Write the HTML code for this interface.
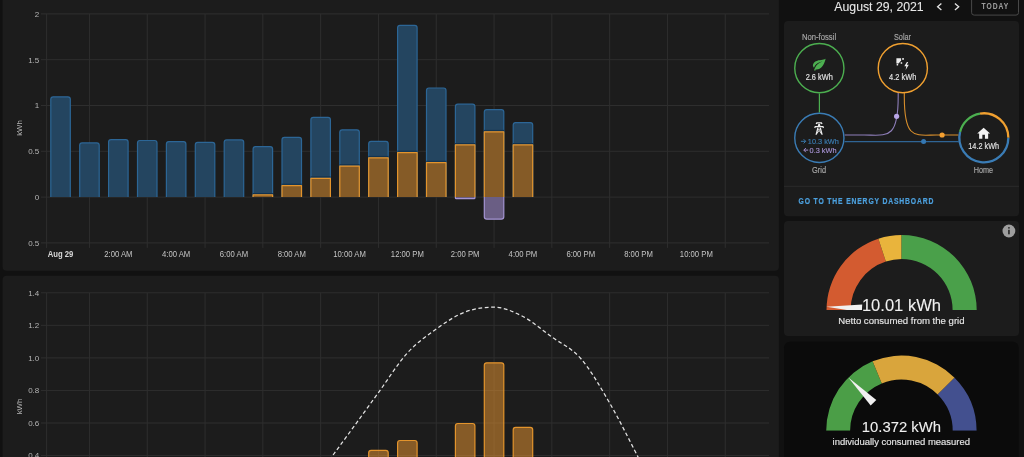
<!DOCTYPE html>
<html><head><meta charset="utf-8"><style>
html,body{margin:0;padding:0;background:#111111;width:1024px;height:457px;overflow:hidden}
svg{display:block;will-change:transform}
</style></head><body>
<svg width="1024" height="457" viewBox="0 0 1024 457">
<rect width="1024" height="457" fill="#111111"/>
<rect x="2.6" y="-10" width="776.3" height="280.8" rx="4" fill="#1c1c1c"/>
<rect x="2.6" y="275.8" width="776.3" height="200" rx="4" fill="#1c1c1c"/>
<rect x="784" y="21" width="235" height="195.2" rx="4" fill="#1c1c1c"/>
<rect x="784" y="221" width="235" height="115" rx="4" fill="#1c1c1c"/>
<rect x="784" y="341.7" width="234.7" height="130" rx="6" fill="#0b0b0b"/>
<g stroke="#2e2e2e" stroke-width="1"><line x1="41" y1="13.90" x2="769" y2="13.90"/><line x1="41" y1="59.70" x2="769" y2="59.70"/><line x1="41" y1="105.50" x2="769" y2="105.50"/><line x1="41" y1="151.30" x2="769" y2="151.30"/><line x1="41" y1="197.10" x2="769" y2="197.10"/><line x1="41" y1="242.90" x2="769" y2="242.90"/><line x1="46.6" y1="13.90" x2="46.6" y2="247.90"/><line x1="89.45" y1="13.90" x2="89.45" y2="247.90"/><line x1="147.25" y1="13.90" x2="147.25" y2="247.90"/><line x1="205.05" y1="13.90" x2="205.05" y2="247.90"/><line x1="262.85" y1="13.90" x2="262.85" y2="247.90"/><line x1="320.65" y1="13.90" x2="320.65" y2="247.90"/><line x1="378.45" y1="13.90" x2="378.45" y2="247.90"/><line x1="436.25" y1="13.90" x2="436.25" y2="247.90"/><line x1="494.05" y1="13.90" x2="494.05" y2="247.90"/><line x1="551.85" y1="13.90" x2="551.85" y2="247.90"/><line x1="609.65" y1="13.90" x2="609.65" y2="247.90"/><line x1="667.45" y1="13.90" x2="667.45" y2="247.90"/><line x1="725.25" y1="13.90" x2="725.25" y2="247.90"/></g>
<g font-family="Liberation Sans, sans-serif" font-size="8" fill="#b4b4b4"><text x="39.3" y="16.80" text-anchor="end">2</text><text x="39.3" y="62.60" text-anchor="end">1.5</text><text x="39.3" y="108.40" text-anchor="end">1</text><text x="39.3" y="154.20" text-anchor="end">0.5</text><text x="39.3" y="200.00" text-anchor="end">0</text><text x="39.3" y="245.80" text-anchor="end">0.5</text></g>
<text font-family="Liberation Sans, sans-serif" font-size="7.8" fill="#b4b4b4" transform="translate(22.3,128) rotate(-90)" text-anchor="middle">kWh</text>
<g font-family="Liberation Sans, sans-serif" font-size="8.4" fill="#c4c4c4"><text x="60.55" y="256.9" text-anchor="middle" font-weight="bold" fill="#d8d8d8" textLength="25.67" lengthAdjust="spacingAndGlyphs">Aug 29</text><text x="118.35" y="256.9" text-anchor="middle" textLength="28.25" lengthAdjust="spacingAndGlyphs">2:00 AM</text><text x="176.15" y="256.9" text-anchor="middle" textLength="28.25" lengthAdjust="spacingAndGlyphs">4:00 AM</text><text x="233.95" y="256.9" text-anchor="middle" textLength="28.25" lengthAdjust="spacingAndGlyphs">6:00 AM</text><text x="291.75" y="256.9" text-anchor="middle" textLength="28.25" lengthAdjust="spacingAndGlyphs">8:00 AM</text><text x="349.55" y="256.9" text-anchor="middle" textLength="32.53" lengthAdjust="spacingAndGlyphs">10:00 AM</text><text x="407.35" y="256.9" text-anchor="middle" textLength="32.96" lengthAdjust="spacingAndGlyphs">12:00 PM</text><text x="465.15" y="256.9" text-anchor="middle" textLength="28.67" lengthAdjust="spacingAndGlyphs">2:00 PM</text><text x="522.95" y="256.9" text-anchor="middle" textLength="28.67" lengthAdjust="spacingAndGlyphs">4:00 PM</text><text x="580.75" y="256.9" text-anchor="middle" textLength="28.67" lengthAdjust="spacingAndGlyphs">6:00 PM</text><text x="638.55" y="256.9" text-anchor="middle" textLength="28.67" lengthAdjust="spacingAndGlyphs">8:00 PM</text><text x="696.35" y="256.9" text-anchor="middle" textLength="32.96" lengthAdjust="spacingAndGlyphs">10:00 PM</text></g>
<g><path d="M50.80,197.10 L50.80,99.20 Q50.80,96.80 53.20,96.80 L67.90,96.80 Q70.30,96.80 70.30,99.20 L70.30,197.10 Z" fill="#244560"/><path d="M50.80,197.10 L50.80,99.20 Q50.80,96.80 53.20,96.80 L67.90,96.80 Q70.30,96.80 70.30,99.20 L70.30,197.10" fill="none" stroke="#2c6696" stroke-width="1.2"/><path d="M79.70,197.10 L79.70,145.30 Q79.70,142.90 82.10,142.90 L96.80,142.90 Q99.20,142.90 99.20,145.30 L99.20,197.10 Z" fill="#244560"/><path d="M79.70,197.10 L79.70,145.30 Q79.70,142.90 82.10,142.90 L96.80,142.90 Q99.20,142.90 99.20,145.30 L99.20,197.10" fill="none" stroke="#2c6696" stroke-width="1.2"/><path d="M108.60,197.10 L108.60,142.10 Q108.60,139.70 111.00,139.70 L125.70,139.70 Q128.10,139.70 128.10,142.10 L128.10,197.10 Z" fill="#244560"/><path d="M108.60,197.10 L108.60,142.10 Q108.60,139.70 111.00,139.70 L125.70,139.70 Q128.10,139.70 128.10,142.10 L128.10,197.10" fill="none" stroke="#2c6696" stroke-width="1.2"/><path d="M137.50,197.10 L137.50,142.90 Q137.50,140.50 139.90,140.50 L154.60,140.50 Q157.00,140.50 157.00,142.90 L157.00,197.10 Z" fill="#244560"/><path d="M137.50,197.10 L137.50,142.90 Q137.50,140.50 139.90,140.50 L154.60,140.50 Q157.00,140.50 157.00,142.90 L157.00,197.10" fill="none" stroke="#2c6696" stroke-width="1.2"/><path d="M166.40,197.10 L166.40,144.00 Q166.40,141.60 168.80,141.60 L183.50,141.60 Q185.90,141.60 185.90,144.00 L185.90,197.10 Z" fill="#244560"/><path d="M166.40,197.10 L166.40,144.00 Q166.40,141.60 168.80,141.60 L183.50,141.60 Q185.90,141.60 185.90,144.00 L185.90,197.10" fill="none" stroke="#2c6696" stroke-width="1.2"/><path d="M195.30,197.10 L195.30,144.80 Q195.30,142.40 197.70,142.40 L212.40,142.40 Q214.80,142.40 214.80,144.80 L214.80,197.10 Z" fill="#244560"/><path d="M195.30,197.10 L195.30,144.80 Q195.30,142.40 197.70,142.40 L212.40,142.40 Q214.80,142.40 214.80,144.80 L214.80,197.10" fill="none" stroke="#2c6696" stroke-width="1.2"/><path d="M224.20,197.10 L224.20,142.30 Q224.20,139.90 226.60,139.90 L241.30,139.90 Q243.70,139.90 243.70,142.30 L243.70,197.10 Z" fill="#244560"/><path d="M224.20,197.10 L224.20,142.30 Q224.20,139.90 226.60,139.90 L241.30,139.90 Q243.70,139.90 243.70,142.30 L243.70,197.10" fill="none" stroke="#2c6696" stroke-width="1.2"/><path d="M253.10,197.10 L253.10,149.00 Q253.10,146.60 255.50,146.60 L270.20,146.60 Q272.60,146.60 272.60,149.00 L272.60,197.10 Z" fill="#244560"/><path d="M253.10,197.10 L253.10,149.00 Q253.10,146.60 255.50,146.60 L270.20,146.60 Q272.60,146.60 272.60,149.00 L272.60,197.10" fill="none" stroke="#2c6696" stroke-width="1.2"/><path d="M282.00,197.10 L282.00,139.80 Q282.00,137.40 284.40,137.40 L299.10,137.40 Q301.50,137.40 301.50,139.80 L301.50,197.10 Z" fill="#244560"/><path d="M282.00,197.10 L282.00,139.80 Q282.00,137.40 284.40,137.40 L299.10,137.40 Q301.50,137.40 301.50,139.80 L301.50,197.10" fill="none" stroke="#2c6696" stroke-width="1.2"/><path d="M310.90,197.10 L310.90,119.80 Q310.90,117.40 313.30,117.40 L328.00,117.40 Q330.40,117.40 330.40,119.80 L330.40,197.10 Z" fill="#244560"/><path d="M310.90,197.10 L310.90,119.80 Q310.90,117.40 313.30,117.40 L328.00,117.40 Q330.40,117.40 330.40,119.80 L330.40,197.10" fill="none" stroke="#2c6696" stroke-width="1.2"/><path d="M339.80,197.10 L339.80,132.20 Q339.80,129.80 342.20,129.80 L356.90,129.80 Q359.30,129.80 359.30,132.20 L359.30,197.10 Z" fill="#244560"/><path d="M339.80,197.10 L339.80,132.20 Q339.80,129.80 342.20,129.80 L356.90,129.80 Q359.30,129.80 359.30,132.20 L359.30,197.10" fill="none" stroke="#2c6696" stroke-width="1.2"/><path d="M368.70,197.10 L368.70,143.70 Q368.70,141.30 371.10,141.30 L385.80,141.30 Q388.20,141.30 388.20,143.70 L388.20,197.10 Z" fill="#244560"/><path d="M368.70,197.10 L368.70,143.70 Q368.70,141.30 371.10,141.30 L385.80,141.30 Q388.20,141.30 388.20,143.70 L388.20,197.10" fill="none" stroke="#2c6696" stroke-width="1.2"/><path d="M397.60,197.10 L397.60,27.70 Q397.60,25.30 400.00,25.30 L414.70,25.30 Q417.10,25.30 417.10,27.70 L417.10,197.10 Z" fill="#244560"/><path d="M397.60,197.10 L397.60,27.70 Q397.60,25.30 400.00,25.30 L414.70,25.30 Q417.10,25.30 417.10,27.70 L417.10,197.10" fill="none" stroke="#2c6696" stroke-width="1.2"/><path d="M426.50,197.10 L426.50,90.40 Q426.50,88.00 428.90,88.00 L443.60,88.00 Q446.00,88.00 446.00,90.40 L446.00,197.10 Z" fill="#244560"/><path d="M426.50,197.10 L426.50,90.40 Q426.50,88.00 428.90,88.00 L443.60,88.00 Q446.00,88.00 446.00,90.40 L446.00,197.10" fill="none" stroke="#2c6696" stroke-width="1.2"/><path d="M455.40,197.10 L455.40,106.60 Q455.40,104.20 457.80,104.20 L472.50,104.20 Q474.90,104.20 474.90,106.60 L474.90,197.10 Z" fill="#244560"/><path d="M455.40,197.10 L455.40,106.60 Q455.40,104.20 457.80,104.20 L472.50,104.20 Q474.90,104.20 474.90,106.60 L474.90,197.10" fill="none" stroke="#2c6696" stroke-width="1.2"/><path d="M484.30,197.10 L484.30,112.10 Q484.30,109.70 486.70,109.70 L501.40,109.70 Q503.80,109.70 503.80,112.10 L503.80,197.10 Z" fill="#244560"/><path d="M484.30,197.10 L484.30,112.10 Q484.30,109.70 486.70,109.70 L501.40,109.70 Q503.80,109.70 503.80,112.10 L503.80,197.10" fill="none" stroke="#2c6696" stroke-width="1.2"/><path d="M513.20,197.10 L513.20,125.00 Q513.20,122.60 515.60,122.60 L530.30,122.60 Q532.70,122.60 532.70,125.00 L532.70,197.10 Z" fill="#244560"/><path d="M513.20,197.10 L513.20,125.00 Q513.20,122.60 515.60,122.60 L530.30,122.60 Q532.70,122.60 532.70,125.00 L532.70,197.10" fill="none" stroke="#2c6696" stroke-width="1.2"/><rect x="252.80" y="193.00" width="20.10" height="1.0" fill="#12324f"/><path d="M253.10,197.10 L253.10,194.91 Q253.10,194.90 253.11,194.90 L272.59,194.90 Q272.60,194.90 272.60,194.91 L272.60,197.10 Z" fill="#855b27"/><path d="M253.10,197.10 L253.10,194.91 Q253.10,194.90 253.11,194.90 L272.59,194.90 Q272.60,194.90 272.60,194.91 L272.60,197.10" fill="none" stroke="#e3942c" stroke-width="1.2"/><rect x="281.70" y="183.70" width="20.10" height="1.0" fill="#12324f"/><path d="M282.00,197.10 L282.00,185.61 Q282.00,185.60 282.01,185.60 L301.49,185.60 Q301.50,185.60 301.50,185.61 L301.50,197.10 Z" fill="#855b27"/><path d="M282.00,197.10 L282.00,185.61 Q282.00,185.60 282.01,185.60 L301.49,185.60 Q301.50,185.60 301.50,185.61 L301.50,197.10" fill="none" stroke="#e3942c" stroke-width="1.2"/><rect x="310.60" y="176.40" width="20.10" height="1.0" fill="#12324f"/><path d="M310.90,197.10 L310.90,178.31 Q310.90,178.30 310.91,178.30 L330.39,178.30 Q330.40,178.30 330.40,178.31 L330.40,197.10 Z" fill="#855b27"/><path d="M310.90,197.10 L310.90,178.31 Q310.90,178.30 310.91,178.30 L330.39,178.30 Q330.40,178.30 330.40,178.31 L330.40,197.10" fill="none" stroke="#e3942c" stroke-width="1.2"/><rect x="339.50" y="164.20" width="20.10" height="1.0" fill="#12324f"/><path d="M339.80,197.10 L339.80,166.11 Q339.80,166.10 339.81,166.10 L359.29,166.10 Q359.30,166.10 359.30,166.11 L359.30,197.10 Z" fill="#855b27"/><path d="M339.80,197.10 L339.80,166.11 Q339.80,166.10 339.81,166.10 L359.29,166.10 Q359.30,166.10 359.30,166.11 L359.30,197.10" fill="none" stroke="#e3942c" stroke-width="1.2"/><rect x="368.40" y="155.90" width="20.10" height="1.0" fill="#12324f"/><path d="M368.70,197.10 L368.70,157.81 Q368.70,157.80 368.71,157.80 L388.19,157.80 Q388.20,157.80 388.20,157.81 L388.20,197.10 Z" fill="#855b27"/><path d="M368.70,197.10 L368.70,157.81 Q368.70,157.80 368.71,157.80 L388.19,157.80 Q388.20,157.80 388.20,157.81 L388.20,197.10" fill="none" stroke="#e3942c" stroke-width="1.2"/><rect x="397.30" y="150.70" width="20.10" height="1.0" fill="#12324f"/><path d="M397.60,197.10 L397.60,152.61 Q397.60,152.60 397.61,152.60 L417.09,152.60 Q417.10,152.60 417.10,152.61 L417.10,197.10 Z" fill="#855b27"/><path d="M397.60,197.10 L397.60,152.61 Q397.60,152.60 397.61,152.60 L417.09,152.60 Q417.10,152.60 417.10,152.61 L417.10,197.10" fill="none" stroke="#e3942c" stroke-width="1.2"/><rect x="426.20" y="160.80" width="20.10" height="1.0" fill="#12324f"/><path d="M426.50,197.10 L426.50,162.71 Q426.50,162.70 426.51,162.70 L445.99,162.70 Q446.00,162.70 446.00,162.71 L446.00,197.10 Z" fill="#855b27"/><path d="M426.50,197.10 L426.50,162.71 Q426.50,162.70 426.51,162.70 L445.99,162.70 Q446.00,162.70 446.00,162.71 L446.00,197.10" fill="none" stroke="#e3942c" stroke-width="1.2"/><rect x="455.10" y="143.00" width="20.10" height="1.0" fill="#12324f"/><path d="M455.40,197.10 L455.40,144.91 Q455.40,144.90 455.41,144.90 L474.89,144.90 Q474.90,144.90 474.90,144.91 L474.90,197.10 Z" fill="#855b27"/><path d="M455.40,197.10 L455.40,144.91 Q455.40,144.90 455.41,144.90 L474.89,144.90 Q474.90,144.90 474.90,144.91 L474.90,197.10" fill="none" stroke="#e3942c" stroke-width="1.2"/><path d="M455.40,197.10 L455.40,197.90 Q455.40,198.70 456.20,198.70 L474.10,198.70 Q474.90,198.70 474.90,197.90 L474.90,197.10 Z" fill="#6a5e84"/><path d="M455.40,197.10 L455.40,197.90 Q455.40,198.70 456.20,198.70 L474.10,198.70 Q474.90,198.70 474.90,197.90 L474.90,197.10" fill="none" stroke="#a494d2" stroke-width="1.2"/><rect x="484.00" y="129.90" width="20.10" height="1.0" fill="#12324f"/><path d="M484.30,197.10 L484.30,131.81 Q484.30,131.80 484.31,131.80 L503.79,131.80 Q503.80,131.80 503.80,131.81 L503.80,197.10 Z" fill="#855b27"/><path d="M484.30,197.10 L484.30,131.81 Q484.30,131.80 484.31,131.80 L503.79,131.80 Q503.80,131.80 503.80,131.81 L503.80,197.10" fill="none" stroke="#e3942c" stroke-width="1.2"/><path d="M484.30,197.10 L484.30,216.80 Q484.30,219.20 486.70,219.20 L501.40,219.20 Q503.80,219.20 503.80,216.80 L503.80,197.10 Z" fill="#6a5e84"/><path d="M484.30,197.10 L484.30,216.80 Q484.30,219.20 486.70,219.20 L501.40,219.20 Q503.80,219.20 503.80,216.80 L503.80,197.10" fill="none" stroke="#a494d2" stroke-width="1.2"/><rect x="512.90" y="143.00" width="20.10" height="1.0" fill="#12324f"/><path d="M513.20,197.10 L513.20,144.91 Q513.20,144.90 513.21,144.90 L532.69,144.90 Q532.70,144.90 532.70,144.91 L532.70,197.10 Z" fill="#855b27"/><path d="M513.20,197.10 L513.20,144.91 Q513.20,144.90 513.21,144.90 L532.69,144.90 Q532.70,144.90 532.70,144.91 L532.70,197.10" fill="none" stroke="#e3942c" stroke-width="1.2"/></g>
<g stroke="#2e2e2e" stroke-width="1"><line x1="41" y1="292.80" x2="769" y2="292.80"/><line x1="41" y1="325.35" x2="769" y2="325.35"/><line x1="41" y1="357.90" x2="769" y2="357.90"/><line x1="41" y1="390.45" x2="769" y2="390.45"/><line x1="41" y1="423.00" x2="769" y2="423.00"/><line x1="41" y1="455.55" x2="769" y2="455.55"/><line x1="46.6" y1="292.8" x2="46.6" y2="470"/><line x1="89.45" y1="292.8" x2="89.45" y2="470"/><line x1="147.25" y1="292.8" x2="147.25" y2="470"/><line x1="205.05" y1="292.8" x2="205.05" y2="470"/><line x1="262.85" y1="292.8" x2="262.85" y2="470"/><line x1="320.65" y1="292.8" x2="320.65" y2="470"/><line x1="378.45" y1="292.8" x2="378.45" y2="470"/><line x1="436.25" y1="292.8" x2="436.25" y2="470"/><line x1="494.05" y1="292.8" x2="494.05" y2="470"/><line x1="551.85" y1="292.8" x2="551.85" y2="470"/><line x1="609.65" y1="292.8" x2="609.65" y2="470"/><line x1="667.45" y1="292.8" x2="667.45" y2="470"/><line x1="725.25" y1="292.8" x2="725.25" y2="470"/></g>
<g font-family="Liberation Sans, sans-serif" font-size="8" fill="#b4b4b4"><text x="39.3" y="295.70" text-anchor="end">1.4</text><text x="39.3" y="328.25" text-anchor="end">1.2</text><text x="39.3" y="360.80" text-anchor="end">1.0</text><text x="39.3" y="393.35" text-anchor="end">0.8</text><text x="39.3" y="425.90" text-anchor="end">0.6</text><text x="39.3" y="458.45" text-anchor="end">0.4</text></g>
<text font-family="Liberation Sans, sans-serif" font-size="7.8" fill="#b4b4b4" transform="translate(21.5,406.5) rotate(-90)" text-anchor="middle">kWh</text>
<g><path d="M368.70,480.00 L368.70,452.80 Q368.70,450.40 371.10,450.40 L385.80,450.40 Q388.20,450.40 388.20,452.80 L388.20,480.00 Z" fill="rgba(240,154,50,0.5)"/><path d="M368.70,480.00 L368.70,452.80 Q368.70,450.40 371.10,450.40 L385.80,450.40 Q388.20,450.40 388.20,452.80 L388.20,480.00" fill="none" stroke="#e3942c" stroke-width="1.2"/><path d="M397.60,480.00 L397.60,442.90 Q397.60,440.50 400.00,440.50 L414.70,440.50 Q417.10,440.50 417.10,442.90 L417.10,480.00 Z" fill="rgba(240,154,50,0.5)"/><path d="M397.60,480.00 L397.60,442.90 Q397.60,440.50 400.00,440.50 L414.70,440.50 Q417.10,440.50 417.10,442.90 L417.10,480.00" fill="none" stroke="#e3942c" stroke-width="1.2"/><path d="M455.40,480.00 L455.40,425.90 Q455.40,423.50 457.80,423.50 L472.50,423.50 Q474.90,423.50 474.90,425.90 L474.90,480.00 Z" fill="rgba(240,154,50,0.5)"/><path d="M455.40,480.00 L455.40,425.90 Q455.40,423.50 457.80,423.50 L472.50,423.50 Q474.90,423.50 474.90,425.90 L474.90,480.00" fill="none" stroke="#e3942c" stroke-width="1.2"/><path d="M484.30,480.00 L484.30,365.20 Q484.30,362.80 486.70,362.80 L501.40,362.80 Q503.80,362.80 503.80,365.20 L503.80,480.00 Z" fill="rgba(240,154,50,0.5)"/><path d="M484.30,480.00 L484.30,365.20 Q484.30,362.80 486.70,362.80 L501.40,362.80 Q503.80,362.80 503.80,365.20 L503.80,480.00" fill="none" stroke="#e3942c" stroke-width="1.2"/><path d="M513.20,480.00 L513.20,429.70 Q513.20,427.30 515.60,427.30 L530.30,427.30 Q532.70,427.30 532.70,429.70 L532.70,480.00 Z" fill="rgba(240,154,50,0.5)"/><path d="M513.20,480.00 L513.20,429.70 Q513.20,427.30 515.60,427.30 L530.30,427.30 Q532.70,427.30 532.70,429.70 L532.70,480.00" fill="none" stroke="#e3942c" stroke-width="1.2"/></g>
<path d="M291.75,512.00 C301.38,498.67 311.02,485.25 320.65,472.00 C330.28,458.75 339.92,445.73 349.55,432.50 C359.18,419.27 368.82,405.85 378.45,392.60 C388.08,379.35 397.72,363.60 407.35,353.00 C416.98,342.40 426.62,335.83 436.25,329.00 C445.88,322.17 455.52,315.63 465.15,312.00 C474.78,308.37 484.42,307.20 494.05,307.20 C503.68,307.20 513.32,311.53 522.95,316.50 C532.58,321.47 542.22,330.00 551.85,337.00 C561.48,344.00 571.12,347.50 580.75,358.50 C590.38,369.50 600.02,386.42 609.65,403.00 C619.28,419.58 628.92,439.33 638.55,458.00 C648.18,476.67 657.82,496.00 667.45,515.00" fill="none" stroke="#e4e4e4" stroke-width="1.25" stroke-dasharray="3.8 2.6"/>
<text font-family="Liberation Sans, sans-serif" font-size="12.7" x="834.3" y="10.9" textLength="89.4" lengthAdjust="spacingAndGlyphs" fill="#e8e8e8" stroke="#e8e8e8" stroke-width="0.08">August 29, 2021</text>
<path d="M941.4,3.6 L937.6,6.8 L941.4,10.0" fill="none" stroke="#e4e4e4" stroke-width="1.3"/>
<path d="M954.9,3.6 L958.7,6.8 L954.9,10.0" fill="none" stroke="#e4e4e4" stroke-width="1.3"/>
<rect x="971.6" y="-5" width="46.9" height="20.1" rx="2.5" fill="none" stroke="#484848" stroke-width="1"/>
<text font-family="Liberation Sans, sans-serif" font-size="8.6" font-weight="bold" transform="translate(981.4,9.0) scale(0.78,1)" textLength="34.36" lengthAdjust="spacing" fill="#9c9c9c" stroke="#9c9c9c" stroke-width="0.1">TODAY</text>
<line x1="784" y1="186.3" x2="1019" y2="186.3" stroke="#2b2b2b" stroke-width="1"/>
<text font-family="Liberation Sans, sans-serif" font-size="8.5" font-weight="bold" transform="translate(798.6,204.1) scale(0.8,1)" textLength="168.50" lengthAdjust="spacing" fill="#4ca0de" stroke="#4ca0de" stroke-width="0.2">GO TO THE ENERGY DASHBOARD</text>
<text font-family="Liberation Sans, sans-serif" font-size="8.2" x="801.9" y="39.6" textLength="34.2" lengthAdjust="spacingAndGlyphs" fill="#a8a8a8" stroke="#a8a8a8" stroke-width="0.15">Non-fossil</text>
<text font-family="Liberation Sans, sans-serif" font-size="8.2" x="894.0" y="39.6" textLength="17.0" lengthAdjust="spacingAndGlyphs" fill="#a8a8a8" stroke="#a8a8a8" stroke-width="0.15">Solar</text>
<text font-family="Liberation Sans, sans-serif" font-size="8.2" x="812.0" y="172.8" textLength="14.0" lengthAdjust="spacingAndGlyphs" fill="#a8a8a8" stroke="#a8a8a8" stroke-width="0.15">Grid</text>
<text font-family="Liberation Sans, sans-serif" font-size="8.2" x="973.8" y="172.8" textLength="19.3" lengthAdjust="spacingAndGlyphs" fill="#a8a8a8" stroke="#a8a8a8" stroke-width="0.15">Home</text>
<line x1="819.4" y1="93.5" x2="819.4" y2="112.5" stroke="#4caf50" stroke-width="1.2"/>
<path d="M898.2,92 L898.2,96.5 C898.2,140.5 886.8,135 864,135 L844.6,135" fill="none" stroke="#8e7eb9" stroke-width="1.1"/>
<path d="M904.3,92 L904.3,96.5 C904.3,140.5 915.1,135 936.8,135 L958.6,135" fill="none" stroke="#d98f2c" stroke-width="1.1"/>
<line x1="844.6" y1="141.6" x2="958.6" y2="141.6" stroke="#2f6494" stroke-width="1.2"/>
<circle cx="896.6" cy="116.3" r="2.6" fill="#b9a6e6"/>
<circle cx="942.1" cy="135" r="2.6" fill="#f5a030"/>
<circle cx="923.6" cy="141.6" r="2.5" fill="#3477b2"/>
<circle cx="819.35" cy="68.15" r="24.6" fill="none" stroke="#4caf50" stroke-width="1.4"/>
<circle cx="902.8" cy="68.15" r="24.6" fill="none" stroke="#f0a030" stroke-width="1.4"/>
<circle cx="819.35" cy="137.9" r="24.6" fill="none" stroke="#3a7cb5" stroke-width="1.4"/>
<path d="M980.02,113.60 A24.5,24.5 0 0 1 1008.35,137.80" fill="none" stroke="#f0a030" stroke-width="2.3"/>
<path d="M1008.35,137.80 A24.5,24.5 0 1 1 960.08,131.87" fill="none" stroke="#3a7cb5" stroke-width="2.3"/>
<path d="M960.08,131.87 A24.5,24.5 0 0 1 980.02,113.60" fill="none" stroke="#4caf50" stroke-width="2.3"/>
<text font-family="Liberation Sans, sans-serif" font-size="8.7" x="805.7" y="79.6" textLength="27.1" lengthAdjust="spacingAndGlyphs" fill="#e4e4e4" stroke="#e4e4e4" stroke-width="0.15">2.6 kWh</text>
<text font-family="Liberation Sans, sans-serif" font-size="8.7" x="889.1" y="79.6" textLength="27.2" lengthAdjust="spacingAndGlyphs" fill="#e4e4e4" stroke="#e4e4e4" stroke-width="0.15">4.2 kWh</text>
<text font-family="Liberation Sans, sans-serif" font-size="8.6" x="968.3" y="149.1" textLength="30.8" lengthAdjust="spacingAndGlyphs" fill="#e4e4e4" stroke="#e4e4e4" stroke-width="0.15">14.2 kWh</text>
<text font-family="Liberation Sans, sans-serif" font-size="8.0" x="807.8" y="143.9" textLength="31.1" lengthAdjust="spacingAndGlyphs" fill="#3b7db3" stroke="#3b7db3" stroke-width="0.15">10.3 kWh</text>
<text font-family="Liberation Sans, sans-serif" font-size="8.0" x="809.6" y="152.8" textLength="26.9" lengthAdjust="spacingAndGlyphs" fill="#a894d6" stroke="#a894d6" stroke-width="0.15">0.3 kWh</text>
<path d="M800.9,141.3 L805.6,141.3 M803.6,139.2 L805.7,141.3 L803.6,143.4" fill="none" stroke="#3b7db3" stroke-width="0.95"/>
<path d="M808.2,150.1 L803.9,150.1 M805.9,148.0 L803.8,150.1 L805.9,152.2" fill="none" stroke="#a894d6" stroke-width="0.95"/>
<path transform="translate(811.6,56.7) scale(0.64)" d="M17,8C8,10 5.9,16.17 3.82,21.34L5.71,22L6.66,19.7C7.14,19.87 7.64,20 8,20C19,20 22,3 22,3C21,5 14,5.25 9,6.25C4,7.25 2,11.5 2,13.5C2,15.5 3.75,17.25 3.75,17.25C7,8 17,8 17,8Z" fill="#4caf50"/>
<g fill="#ececec"><path d="M896.4,58.2 L901.1,58.2 L901.1,60.6 L898.6,63.5 L896.4,63.5 Z"/><rect x="902.1" y="58.2" width="1.9" height="1.5"/><path d="M901.4,61.9 L902.6,62.9 L901.4,63.9 L900.2,62.9 Z"/><circle cx="897.4" cy="64.7" r="0.85"/><path d="M906.9,61.9 L904.3,66.3 L906.3,66.3 L905.6,69.9 L908.8,64.8 L906.8,64.8 L908.2,61.9 Z"/></g>
<path transform="translate(811.5,120.9) scale(0.633)" d="M8.28,5.45L6.5,4.55L7.76,2H16.24L17.5,4.55L15.72,5.45L15,4H9L8.28,5.45M18.62,8H14.09L13.3,5H10.7L9.91,8H5.38L4.1,10.55L5.89,11.44L6.62,10H17.38L18.1,11.44L19.89,10.55L18.62,8M17.77,22H15.7L15.46,21.1L12,15.9L8.53,21.1L8.3,22H6.23L9.12,11H11.19L10.83,12.35L12,14.1L13.16,12.35L12.81,11H14.88L17.77,22M11.4,15L10.5,13.65L9.45,17.6L11.4,15M14.55,17.6L13.5,13.65L12.6,15L14.55,17.6Z" fill="#eeeeee"/>
<path transform="translate(975.9,125.8) scale(0.645)" d="M10,20V14H14V20H19V12H22L12,3L2,12H5V20H10Z" fill="#f2f2f2"/>
<clipPath id="cl1"><rect x="800" y="225" width="210" height="85.1"/></clipPath>
<g clip-path="url(#cl1)"><path d="M826.50,310.10 A75.1,75.1 0 0 1 878.39,238.68 L885.84,261.60 A51.0,51.0 0 0 0 850.60,310.10 Z" fill="#d35b30"/><path d="M878.39,238.68 A75.1,75.1 0 0 1 901.60,235.00 L901.60,259.10 A51.0,51.0 0 0 0 885.84,261.60 Z" fill="#e9b43c"/><path d="M901.60,235.00 A75.1,75.1 0 0 1 976.70,310.10 L952.60,310.10 A51.0,51.0 0 0 0 901.60,259.10 Z" fill="#4aa04a"/><path d="M862.19,304.41 L826.38,306.82 L861.84,312.33 Z" fill="#f0f0f0"/></g>
<text font-family="Liberation Sans, sans-serif" font-size="16.8" x="861.89" y="311.0" textLength="79.13" lengthAdjust="spacingAndGlyphs" fill="#f0f0f0" stroke="#f0f0f0" stroke-width="0.08">10.01 kWh</text>
<text font-family="Liberation Sans, sans-serif" font-size="9.6" x="838.3" y="324.2" textLength="126.3" lengthAdjust="spacingAndGlyphs" fill="#e4e4e4" stroke="#e4e4e4" stroke-width="0.15">Netto consumed from the grid</text>
<circle cx="1008.9" cy="231" r="6.4" fill="#9e9e9e"/><rect x="1008.2" y="229.8" width="1.5" height="4.5" fill="#1c1c1c"/><circle cx="1008.95" cy="227.8" r="0.85" fill="#1c1c1c"/>
<clipPath id="cl2"><rect x="800" y="345" width="210" height="85.8"/></clipPath>
<g clip-path="url(#cl2)"><path d="M826.20,430.80 A75.2,75.2 0 0 1 872.62,361.32 L881.77,383.40 A51.3,51.3 0 0 0 850.10,430.80 Z" fill="#4b9e47"/><path d="M872.62,361.32 A75.2,75.2 0 0 1 954.57,377.63 L937.67,394.53 A51.3,51.3 0 0 0 881.77,383.40 Z" fill="#d9a53c"/><path d="M954.57,377.63 A75.2,75.2 0 0 1 976.60,430.80 L952.70,430.80 A51.3,51.3 0 0 0 937.67,394.53 Z" fill="#43508f"/><path d="M876.29,399.89 L848.35,377.38 L870.67,405.48 Z" fill="#f0f0f0"/></g>
<text font-family="Liberation Sans, sans-serif" font-size="14.8" x="861.78" y="432.3" textLength="79.23" lengthAdjust="spacingAndGlyphs" fill="#f0f0f0" stroke="#f0f0f0" stroke-width="0.08">10.372 kWh</text>
<text font-family="Liberation Sans, sans-serif" font-size="9.6" x="832.6" y="445.3" textLength="137.4" lengthAdjust="spacingAndGlyphs" fill="#e4e4e4" stroke="#e4e4e4" stroke-width="0.15">individually consumed measured</text>
</svg>
</body></html>
